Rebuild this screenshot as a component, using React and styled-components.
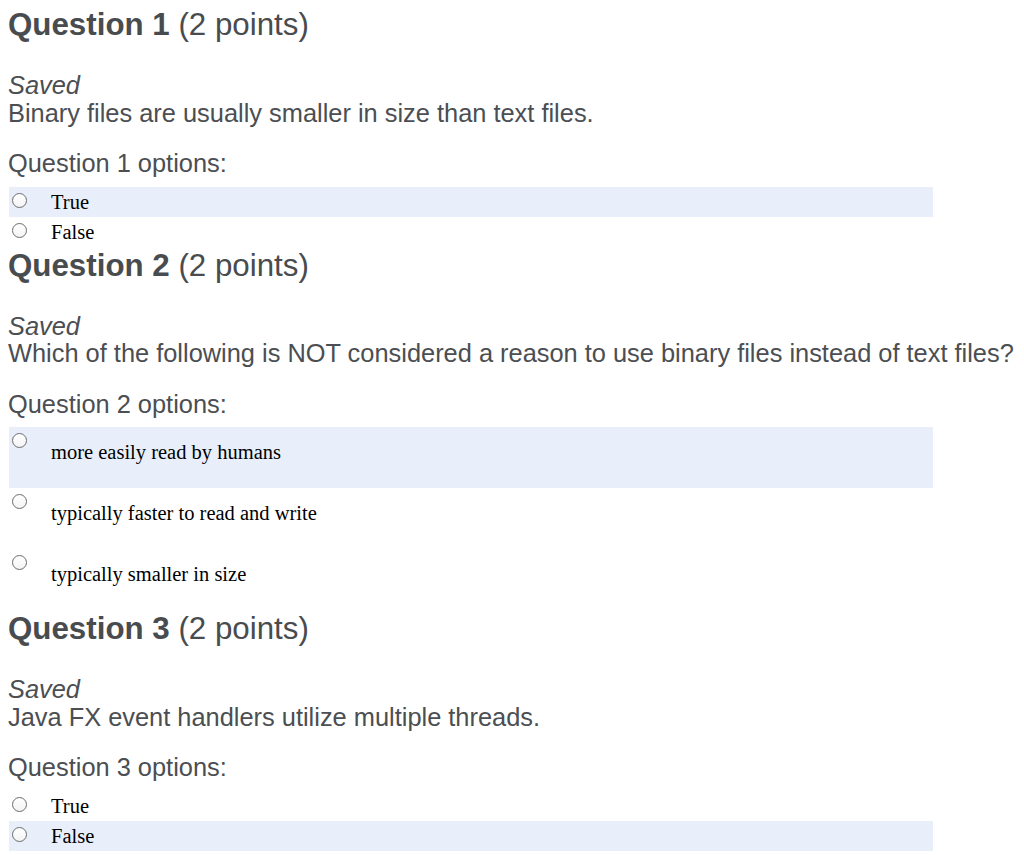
import React from "react";
import styled, { createGlobalStyle } from "styled-components";

const Global = createGlobalStyle`
  html, body { margin: 0; padding: 0; background: #ffffff; }
  body { font-family: "Liberation Sans", Arial, Helvetica, sans-serif; }
`;

const Page = styled.main`
  padding: 7px 0 0 8px;
  display: flex;
  flex-direction: column;
  gap: 1px;
`;

const Block = styled.section`
  display: flex;
  flex-direction: column;
`;

const Heading = styled.h2`
  margin: 0 0 29px;
  font-size: 31.3px;
  line-height: 36px;
  font-weight: 400;
  color: #494c4f;
  white-space: nowrap;
`;

const Strong = styled.strong`
  font-weight: 700;
`;

const Status = styled.div`
  font-size: 25.4px;
  line-height: 27.5px;
  font-style: italic;
  color: #4b4e52;
`;

const Prompt = styled.div`
  font-size: 25.4px;
  line-height: 27.5px;
  color: #4b4e52;
  white-space: nowrap;
`;

const OptionsLabel = styled.div`
  margin: 23px 0 9px;
  font-size: 25.4px;
  line-height: 27.5px;
  color: #4b4e52;
`;

const List = styled.div`
  width: 924px;
  margin-left: 1px;
  display: flex;
  flex-direction: column;
`;

const Row = styled.label`
  display: flex;
  align-items: flex-start;
  background: ${(p) => (p.$selected ? "#e8effb" : "transparent")};
`;

const Radio = styled.span`
  flex: none;
  box-sizing: border-box;
  width: 15px;
  height: 15px;
  margin: 6px 0 0 3px;
  border: 1px solid #6c6c6c;
  border-radius: 50%;
  background: linear-gradient(#ffffff, #f4f4f4);
`;

const OptionText = styled.span`
  margin-left: 24px;
  padding: ${(p) => (p.$tall ? "10px 0 21px" : "0")};
  font-family: "Liberation Serif", "Times New Roman", Times, serif;
  font-size: 20.5px;
  line-height: 30px;
  color: #000;
`;

const questions = [
  {
    n: 1,
    text: "Binary files are usually smaller in size than text files.",
    tall: false,
    options: ["True", "False"],
    selected: 0,
  },
  {
    n: 2,
    text: "Which of the following is NOT considered a reason to use binary files instead of text files?",
    tall: true,
    options: [
      "more easily read by humans",
      "typically faster to read and write",
      "typically smaller in size",
    ],
    selected: 0,
  },
  {
    n: 3,
    text: "Java FX event handlers utilize multiple threads.",
    tall: false,
    options: ["True", "False"],
    selected: 1,
  },
];

export default function App() {
  return (
    <>
      <Global />
      <Page>
        {questions.map((q) => (
          <Block key={q.n}>
            <Heading>
              <Strong>Question {q.n}</Strong> (2 points)
            </Heading>
            <Status>Saved</Status>
            <Prompt>{q.text}</Prompt>
            <OptionsLabel>Question {q.n} options:</OptionsLabel>
            <List>
              {q.options.map((o, i) => (
                <Row key={o} $selected={i === q.selected}>
                  <Radio />
                  <OptionText $tall={q.tall}>{o}</OptionText>
                </Row>
              ))}
            </List>
          </Block>
        ))}
      </Page>
    </>
  );
}
